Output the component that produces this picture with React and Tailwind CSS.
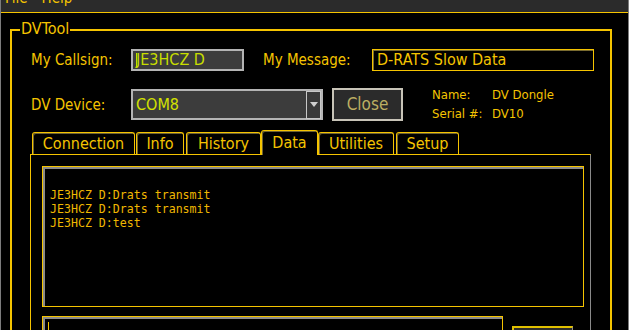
import { useState } from 'react';

const YEL = 'text-[#f5c400]';

const tabs = [
  { label: 'Connection', w: 'w-[103px]', ml: 'ml-[2px]' },
  { label: 'Info', w: 'w-[48px]', ml: 'ml-[1px]' },
  { label: 'History', w: 'w-[75px]', ml: 'ml-[2px]' },
  { label: 'Data', w: 'w-[57px]', ml: 'ml-0' },
  { label: 'Utilities', w: 'w-[76px]', ml: 'ml-0' },
  { label: 'Setup', w: 'w-[63px]', ml: 'ml-[2px]' }
];

const lines = ['JE3HCZ D:Drats transmit', 'JE3HCZ D:Drats transmit', 'JE3HCZ D:test'];

const Tab = ({ tab, active, onClick }) => (
  <button
    onClick={onClick}
    className={`${tab.w} ${tab.ml} flex items-center justify-center rounded-t-[3px] border border-b-0 border-[#f5c400] bg-black text-[16px] leading-none ${YEL} shadow-[inset_1px_1px_0_#6e6233] ${
      active ? 'relative z-10 -mb-px h-[25px]' : 'h-[22px] pt-[1px]'
    }`}
  >
    {tab.label}
  </button>
);

export default function App() {
  const [activeTab, setActiveTab] = useState('Data');

  return (
    <div
      className="w-[629px] h-[330px] overflow-hidden bg-black border-x border-[#7c7c7c] flex flex-col"
      style={{ fontFamily: '"DejaVu Sans Condensed", "DejaVu Sans", sans-serif', fontStretch: 'condensed' }}
    >
      {/* Menu bar, scrolled off the top */}
      <div className="h-[13px] shrink-0 bg-[#2b2b2b] border-b border-[#f5c400] overflow-hidden">
        <div className={`flex gap-[14px] pl-[4px] -mt-[10px] text-[15px] leading-[16px] ${YEL}`}>
          <span>File</span>
          <span>Help</span>
        </div>
      </div>

      {/* DVTool group */}
      <div className="pl-[9px] pt-[16px]">
        <div className="relative w-[602px] h-[320px] border-2 border-[#f5c400]">
          <span className={`absolute -top-[11px] left-[8px] bg-black px-[1px] text-[16px] leading-[18px] ${YEL}`}>
            DVTool
          </span>

          {/* Row 1 */}
          <div className="flex items-center pl-[19px] pt-[18px] h-[22px] box-content">
            <span className={`w-[100px] text-[15px] ${YEL}`}>My Callsign:</span>
            <div className="w-[113px] h-[22px] border-2 border-[#b4b4b4] bg-[#3c3c3c] flex items-center pl-[3px] text-[16px] text-[#c8de00]">
              <span className="w-px h-[15px] bg-[#c8de00] -mr-px" />
              JE3HCZ D
            </div>
            <span className={`ml-[19px] w-[109px] text-[15px] ${YEL}`}>My Message:</span>
            <div className={`w-[222px] h-[22px] border border-[#f5c400] shadow-[inset_1px_1px_0_#7a6c30] bg-black flex items-center pl-[4px] text-[16px] ${YEL}`}>
              D-RATS Slow Data
            </div>
          </div>

          {/* Row 2 */}
          <div className="flex items-start h-[33px] pl-[19px] mt-[17px]">
            <span className={`w-[100px] mt-[6px] text-[15px] ${YEL}`}>DV Device:</span>
            <div className="w-[192px] h-[31px] mt-[1px] border-2 border-[#b4b4b4] bg-[#3c3c3c] flex items-center justify-between">
              <span className="pl-[3px] text-[16px] font-medium text-[#d4e200]">COM8</span>
              <span className="w-[15px] h-[28px] border border-[#c8c8c8] bg-[#3a3a3a] flex items-center justify-center">
                <svg width="8" height="5" viewBox="0 0 8 5">
                  <path d="M0 0h8L4 5z" fill="#d0d0d0" />
                </svg>
              </span>
            </div>
            <button className="ml-[9px] w-[71px] h-[33px] border-2 border-[#c8c4b8] bg-[#2b2b2b] text-[17px] text-[#bcae62]">
              Close
            </button>
            <div className={`ml-[29px] -mt-[1px] grid grid-cols-[60px_auto] gap-y-[3px] text-[13px] leading-[16px] ${YEL}`}>
              <span>Name:</span>
              <span>DV Dongle</span>
              <span>Serial #:</span>
              <span>DV10</span>
            </div>
          </div>

          {/* Tabs */}
          <div className="flex items-end h-[24px] ml-[18px] mt-[9px]">
            {tabs.map(t => (
              <Tab key={t.label} tab={t} active={activeTab === t.label} onClick={() => setActiveTab(t.label)} />
            ))}
          </div>

          {/* Tab panel */}
          <div className="ml-[18px] w-[561px] h-[200px] border-t border-l border-[#f5c400] border-r border-r-[#8a8a8a] pt-[11px] pl-[11px]">
            <div className="w-[542px] h-[141px] border border-[#f5c400] shadow-[inset_2px_2px_0_#8a8a8a] pt-[21px] pl-[7px] text-[11.6px] leading-[14px] text-[#f0b800]"
              style={{ fontFamily: '"DejaVu Sans Mono", monospace', fontStretch: 'normal' }}>
              {lines.map((l, i) => (
                <div key={i}>{l}</div>
              ))}
            </div>
            <div className="flex items-start mt-[9px]">
              <div className="w-[461px] h-[40px] border border-[#f5c400] shadow-[inset_2px_2px_0_#8a8a8a] pl-[5px] pt-[5px]">
                <span className="block w-px h-[14px] bg-[#f5c400]" />
              </div>
              <div className="ml-[9px] mt-[10px] w-[61px] h-[30px] border-t-2 border-l-2 border-[#e0c000] border-r border-r-[#8a8a8a] bg-[#2b2b2b]" />
            </div>
          </div>
        </div>
      </div>
    </div>
  );
}
